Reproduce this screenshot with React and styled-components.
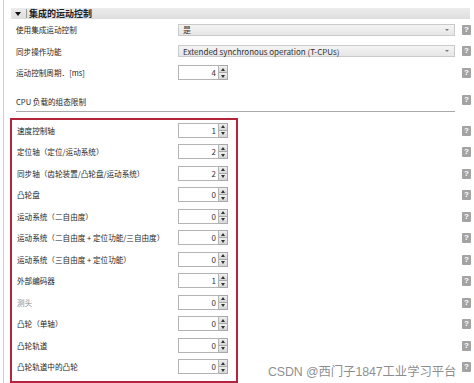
import React from "react";
import styled, { createGlobalStyle } from "styled-components";

const GlobalStyle = createGlobalStyle`
  html, body {
    margin: 0;
    padding: 0;
    background: #ffffff;
  }
  body {
    font-family: "Noto Sans CJK SC", "Noto Sans", sans-serif;
    color: #262626;
  }
`;

const Page = styled.div`
  position: relative;
  width: 474px;
  height: 383px;
  overflow: hidden;
  background: #ffffff;
  display: flex;
  flex-direction: column;
`;

const Panel = styled.div`
  flex: 1;
  margin-left: 3px;
  border-left: 1px solid #cfcfcf;
  padding-top: 8px;
  display: flex;
  flex-direction: column;
`;

const SectionHeader = styled.div`
  margin-left: 7px;
  width: 459px;
  height: 11px;
  background: linear-gradient(#ececec, #dedede);
  display: flex;
  align-items: center;
  font-size: 9px;
  font-weight: 700;
  color: #1e1e1e;
  line-height: 1;
`;

const Caret = styled.span`
  width: 0;
  height: 0;
  margin-left: 4px;
  border-left: 3px solid transparent;
  border-right: 3px solid transparent;
  border-top: 4px solid #111;
`;

const HeaderDivider = styled.span`
  width: 1px;
  height: 9px;
  background: #9a9a9a;
  margin: 0 2px 0 5px;
`;

const Row = styled.div`
  height: 21.5px;
  display: grid;
  grid-template-columns: ${(p) => (p.$inBox ? "161px 50px" : "162px 277px 1fr")};
  align-items: center;
  padding-left: ${(p) => (p.$inBox ? "5px" : "12px")};
  font-size: 7.6px;
  color: ${(p) => (p.$muted ? "#8c8c8c" : "#262626")};
`;

const Label = styled.span`
  white-space: nowrap;
`;

const Select = styled.div`
  height: 12px;
  box-sizing: border-box;
  border: 1px solid #cacaca;
  background: linear-gradient(#f4f4f4, #e6e6e6);
  display: flex;
  align-items: center;
  justify-content: space-between;
  padding: 0 5px 0 4px;
  font-size: 8px;
  color: #333;
`;

const SelectArrow = styled.span`
  width: 0;
  height: 0;
  border-left: 2px solid transparent;
  border-right: 2px solid transparent;
  border-top: 2.5px solid #777;
`;

const Spin = styled.div`
  width: 50px;
  height: 15px;
  display: flex;
`;

const SpinValue = styled.div`
  flex: 1;
  box-sizing: border-box;
  border: 1px solid #b4b4b4;
  background: #fff;
  display: flex;
  align-items: center;
  justify-content: flex-end;
  padding-right: 2px;
  font-size: 8px;
  color: #333;
`;

const SpinButtons = styled.div`
  width: 9px;
  display: flex;
  flex-direction: column;
  border: 1px solid #a8a8a8;
  border-left: none;
  box-sizing: border-box;
`;

const SpinHalf = styled.div`
  flex: 1;
  display: flex;
  align-items: center;
  justify-content: center;
  background: linear-gradient(#f0f0f0, #d6d6d6);
  border-top: ${(p) => (p.$down ? "1px solid #a8a8a8" : "none")};

  &::before {
    content: "";
    width: 0;
    height: 0;
    border-left: 2.5px solid transparent;
    border-right: 2.5px solid transparent;
    ${(p) =>
      p.$down ? "border-top: 3px solid #333;" : "border-bottom: 3px solid #333;"}
  }
`;

const Help = styled.span`
  justify-self: end;
  margin-right: 3px;
  width: 9px;
  height: 10px;
  border-radius: 1px;
  background: #a3a3a3;
  color: #ffffff;
  font-family: "Liberation Sans", Arial, sans-serif;
  font-size: 8px;
  font-weight: 700;
  line-height: 10px;
  text-align: center;
`;

const SubHeading = styled.div`
  margin-top: 4px;
  height: 24px;
  display: grid;
  grid-template-columns: 439px 1fr;
  align-items: center;
  padding-left: 12px;
  font-size: 7.6px;
`;

const SubTitle = styled.span`
  height: 100%;
  display: flex;
  align-items: center;
  border-bottom: 1px solid #a9a9a9;
  box-sizing: border-box;
  padding-top: 4px;
`;

const Group = styled.div`
  margin-top: 6px;
  display: flex;
`;

const RedBox = styled.div`
  margin-left: 6px;
  width: 228px;
  box-sizing: border-box;
  border: 2.5px solid #b3253b;
  padding-bottom: 3px;
`;

const HelpColumn = styled.div`
  flex: 1;
  padding-top: 2.5px;
  display: flex;
  flex-direction: column;
`;

const HelpSlot = styled.div`
  height: 21.5px;
  display: flex;
  align-items: center;
  justify-content: flex-end;
`;

const BottomBar = styled.div`
  height: 4px;
  background: linear-gradient(#7c7c7c, #9a9a9a);
`;

const Watermark = styled.div`
  position: absolute;
  left: 268px;
  top: 362px;
  font-family: "Liberation Sans", "Noto Sans CJK SC", sans-serif;
  font-size: 12.4px;
  color: rgba(120, 120, 120, 0.85);
  white-space: nowrap;
  letter-spacing: -0.1px;
`;

const Spinner = ({ value }) => (
  <Spin>
    <SpinValue>{value}</SpinValue>
    <SpinButtons>
      <SpinHalf />
      <SpinHalf $down />
    </SpinButtons>
  </Spin>
);

const limits = [
  { label: "速度控制轴", value: 1 },
  { label: "定位轴（定位/运动系统）", value: 2 },
  { label: "同步轴（齿轮装置/凸轮盘/运动系统）", value: 2 },
  { label: "凸轮盘", value: 0 },
  { label: "运动系统（二自由度）", value: 0 },
  { label: "运动系统（二自由度 + 定位功能/三自由度）", value: 0 },
  { label: "运动系统（三自由度 + 定位功能）", value: 0 },
  { label: "外部编码器", value: 1 },
  { label: "测头", value: 0, muted: true },
  { label: "凸轮（单轴）", value: 0 },
  { label: "凸轮轨道", value: 0 },
  { label: "凸轮轨道中的凸轮", value: 0 },
];

export default function App() {
  return (
    <>
      <GlobalStyle />
      <Page>
        <Panel>
          <SectionHeader>
            <Caret />
            <HeaderDivider />
            集成的运动控制
          </SectionHeader>

          <Row>
            <Label>使用集成运动控制</Label>
            <Select>
              <span>是</span>
              <SelectArrow />
            </Select>
            <Help>?</Help>
          </Row>
          <Row>
            <Label>同步操作功能</Label>
            <Select>
              <span>Extended synchronous operation (T-CPUs)</span>
              <SelectArrow />
            </Select>
            <Help>?</Help>
          </Row>
          <Row>
            <Label>运动控制周期．[ms]</Label>
            <Spinner value={4} />
            <Help>?</Help>
          </Row>

          <SubHeading>
            <SubTitle>CPU 负载的组态限制</SubTitle>
            <Help>?</Help>
          </SubHeading>

          <Group>
            <RedBox>
              {limits.map((item) => (
                <Row key={item.label} $inBox $muted={item.muted}>
                  <Label>{item.label}</Label>
                  <Spinner value={item.value} />
                </Row>
              ))}
            </RedBox>
            <HelpColumn>
              {limits.map((item) => (
                <HelpSlot key={item.label}>
                  <Help>?</Help>
                </HelpSlot>
              ))}
            </HelpColumn>
          </Group>
        </Panel>
        <BottomBar />
        <Watermark>CSDN @西门子1847工业学习平台</Watermark>
      </Page>
    </>
  );
}
